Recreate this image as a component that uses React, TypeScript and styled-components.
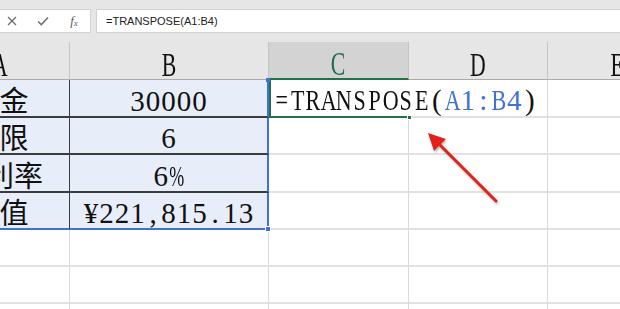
import React from "react";
import styled, { createGlobalStyle } from "styled-components";

const GlobalStyle = createGlobalStyle`
  html, body {
    margin: 0;
    padding: 0;
    background: #fff;
    overflow: hidden;
  }
  * {
    box-sizing: border-box;
  }
`;

// column widths, A is half scrolled off to the left
const colWidths = [140, 199, 140, 139, 140];
const gridCols = colWidths.map((w) => `${w}px`).join(" ");

const GRID = "#dadada";
const GRID_H = "#e2e2e2";
const RANGE_BLUE = "#3f72d4";
const RANGE_LINE = "#3c3c3c";
const RANGE_FILL = "#e8eef9";
const ACTIVE_GREEN = "#217346";

interface RowData {
  h: number;
  a?: string;
  b?: string;
}

const rows: RowData[] = [
  { h: 38, a: "本金", b: "30000" },
  { h: 37, a: "年限", b: "6" },
  { h: 38, a: "年利率", b: "6%" },
  { h: 37, a: "现值", b: "¥221,815.13" },
  { h: 37 },
  { h: 37 },
  { h: 37 },
];

// squeeze factor per char, to mimic the half-width monospaced latin of SimSun
const squeezeOf = (ch: string) => {
  if (ch === "%") return 0.62;
  if (/[A-Z=]/.test(ch)) return 0.76;
  return 1;
};

const SimText = ({ text, color }: { text: string; color?: string }) => (
  <>
    {text.split("").map((ch, i) => (
      <Glyph key={i} $scale={squeezeOf(ch)} $color={color}>
        {ch}
      </Glyph>
    ))}
  </>
);

export default function App() {
  return (
    <Window>
      <GlobalStyle />
      <Toolbar>
        <IconBox>
          <IconSlot>
            <svg width="10" height="10" viewBox="0 0 10 10">
              <path d="M1 1 L9 9 M9 1 L1 9" stroke="#6e6e6e" strokeWidth="1.3" fill="none" />
            </svg>
          </IconSlot>
          <IconSlot>
            <svg width="12" height="10" viewBox="0 0 12 10">
              <path d="M1 5.5 L4.3 8.6 L11 1.4" stroke="#6e6e6e" strokeWidth="1.5" fill="none" />
            </svg>
          </IconSlot>
          <IconSlot>
            <Fx>
              f<sub>x</sub>
            </Fx>
          </IconSlot>
        </IconBox>
        <FormulaInput>=TRANSPOSE(A1:B4)</FormulaInput>
      </Toolbar>

      <Sheet>
        <HeaderRow>
          {["A", "B", "C", "D", "E"].map((c) => (
            <HeaderCell key={c} $active={c === "C"}>
              <HeaderLabel>{c}</HeaderLabel>
            </HeaderCell>
          ))}
        </HeaderRow>

        {rows.map((row, i) => {
          const inRange = i < 4;
          const lastInRange = i === 3;
          return (
            <Row key={i} $h={row.h}>
              <Cell
                $bg={inRange ? RANGE_FILL : undefined}
                $right={inRange ? RANGE_LINE : GRID}
                $bottom={lastInRange ? RANGE_BLUE : inRange ? RANGE_LINE : GRID_H}
              >
                {row.a && <CnText>{row.a}</CnText>}
              </Cell>
              <Cell
                $bg={inRange ? RANGE_FILL : undefined}
                $right={inRange ? RANGE_BLUE : GRID}
                $rightWidth={inRange ? 2 : 1}
                $bottom={lastInRange ? RANGE_BLUE : inRange ? RANGE_LINE : GRID_H}
              >
                {row.b && <SimText text={row.b} />}
                {i === 0 && <TopHandle />}
                {lastInRange && <RangeHandle />}
              </Cell>
              {i === 0 ? (
                <ActiveCell>
                  <FormulaText>
                    <SimText text="=TRANSPOSE(" />
                    <SimText text="A1:B4" color={RANGE_BLUE} />
                    <SimText text=")" />
                  </FormulaText>
                  <FillHandle />
                </ActiveCell>
              ) : (
                <Cell $right={GRID} $bottom={GRID_H} />
              )}
              <Cell $right={GRID} $bottom={GRID_H} />
              <Cell $right={GRID} $bottom={GRID_H} />
            </Row>
          );
        })}
      </Sheet>

      <ArrowLayer width="620" height="309" viewBox="0 0 620 309">
        <line x1="496" y1="201" x2="438" y2="143" stroke="#e3211b" strokeWidth="3" strokeLinecap="round" />
        <polygon points="428,133 446,139 434,151" fill="#e3211b" />
      </ArrowLayer>
    </Window>
  );
}

const Window = styled.div`
  position: relative;
  width: 620px;
  height: 309px;
  overflow: hidden;
  background: #fff;
`;

const Toolbar = styled.div`
  height: 42px;
  background: #e6e6e6;
  display: flex;
  align-items: flex-start;
  gap: 5px;
  padding-top: 9px;
`;

const IconBox = styled.div`
  width: 91px;
  height: 24px;
  background: #fff;
  border: 1px solid #d2d2d2;
  border-left: none;
  display: flex;
  align-items: center;
  gap: 19px;
  padding-left: 6px;
`;

const IconSlot = styled.div`
  width: 12px;
  display: flex;
  align-items: center;
  justify-content: center;
`;

const Fx = styled.span`
  font-family: "Liberation Serif", serif;
  font-style: italic;
  font-size: 13px;
  color: #5c5c5c;
  line-height: 1;

  sub {
    font-size: 9px;
    vertical-align: -1px;
  }
`;

const FormulaInput = styled.div`
  flex: 1;
  height: 24px;
  background: #fff;
  border: 1px solid #d2d2d2;
  border-right: none;
  padding-left: 9px;
  font-family: "Liberation Sans", Arial, sans-serif;
  font-size: 11px;
  line-height: 22px;
  color: #222;
`;

const Sheet = styled.div`
  margin-left: -70px;
`;

const HeaderRow = styled.div`
  display: grid;
  grid-template-columns: ${gridCols};
  height: 38px;
  background: #e6e6e6;
`;

const HeaderCell = styled.div<{ $active?: boolean }>`
  display: flex;
  align-items: flex-end;
  justify-content: center;
  background: ${(p) => (p.$active ? "#d3d3d3" : "#e6e6e6")};
  color: ${(p) => (p.$active ? "#1f6f55" : "#111")};
  border-right: 1px solid #c4c4c4;
  border-bottom: ${(p) => (p.$active ? `2px solid ${ACTIVE_GREEN}` : "1px solid #ababab")};
  overflow: visible;
`;

const HeaderLabel = styled.span`
  display: inline-block;
  font-family: "Liberation Serif", serif;
  font-size: 33px;
  line-height: 33px;
  transform: scaleX(0.66);
  margin-bottom: -3px;
`;

const Row = styled.div<{ $h: number }>`
  display: grid;
  grid-template-columns: ${gridCols};
  height: ${(p) => p.$h}px;
`;

const Cell = styled.div<{
  $bg?: string;
  $right: string;
  $rightWidth?: number;
  $bottom: string;
}>`
  position: relative;
  display: flex;
  align-items: flex-end;
  justify-content: center;
  background: ${(p) => p.$bg ?? "transparent"};
  border-right: ${(p) => p.$rightWidth ?? 1}px solid ${(p) => p.$right};
  border-bottom: 2px solid ${(p) => p.$bottom};
  font-family: "Liberation Serif", "Noto Sans CJK SC", serif;
  font-size: 29px;
  line-height: 29px;
  color: #111;
  white-space: nowrap;
`;

const ActiveCell = styled.div`
  position: relative;
  z-index: 2;
  display: flex;
  align-items: flex-end;
  border-left: 2px solid ${ACTIVE_GREEN};
  border-bottom: 2px solid ${ACTIVE_GREEN};
  font-family: "Liberation Serif", serif;
  font-size: 29px;
  line-height: 29px;
  color: #111;
  white-space: nowrap;
  padding-left: 3px;
`;

const FormulaText = styled.span`
  display: inline-flex;
  margin-bottom: 1px;
`;

const Glyph = styled.span<{ $scale: number; $color?: string }>`
  display: inline-flex;
  justify-content: center;
  width: 15.5px;
  transform: scaleX(${(p) => p.$scale});
  color: ${(p) => p.$color ?? "inherit"};
`;

const CnText = styled.span`
  font-family: "Noto Sans CJK SC", sans-serif;
  font-size: 29px;
  line-height: 34px;
  color: #111;
`;

const FillHandle = styled.div`
  position: absolute;
  right: -3px;
  bottom: -4px;
  width: 5px;
  height: 5px;
  background: ${ACTIVE_GREEN};
  border: 1px solid #fff;
`;

const RangeHandle = styled.div`
  position: absolute;
  right: -4px;
  bottom: -4px;
  width: 6px;
  height: 6px;
  background: ${RANGE_BLUE};
  border: 1px solid #fff;
  z-index: 3;
`;

const TopHandle = styled.div`
  position: absolute;
  right: -3px;
  top: -2px;
  width: 4px;
  height: 4px;
  background: ${RANGE_BLUE};
  z-index: 3;
`;

const ArrowLayer = styled.svg`
  position: absolute;
  left: 0;
  top: 0;
  pointer-events: none;
  filter: drop-shadow(1px 2px 1px rgba(0, 0, 0, 0.25));
`;
